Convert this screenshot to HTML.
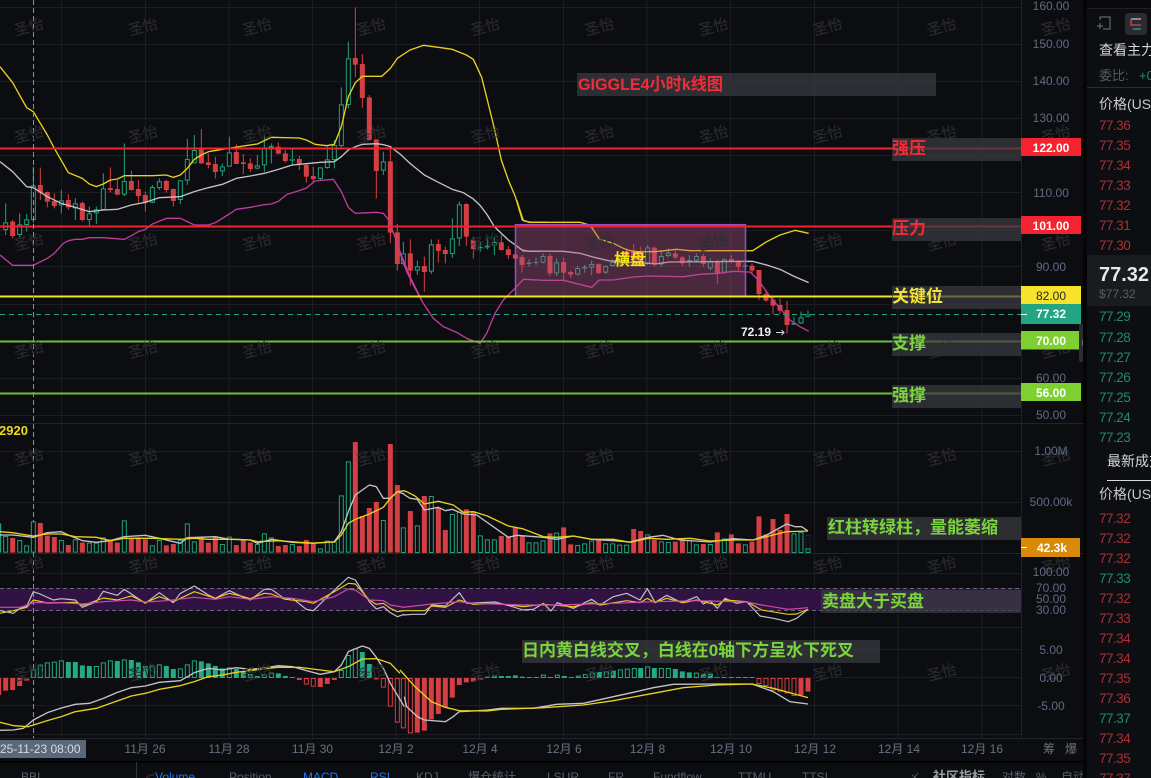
<!DOCTYPE html>
<html lang="zh"><head><meta charset="utf-8"><title>GIGGLE</title>
<style>
html,body{margin:0;padding:0;width:1151px;height:778px;overflow:hidden;background:#0c0d10}
svg{display:block;font-family:"Liberation Sans","Noto Sans CJK SC",sans-serif}
.ax{fill:#5f6b85;font-size:12px;text-anchor:middle}
.xl{fill:#667084;font-size:12px;text-anchor:middle}
.an{font-size:17px;font-weight:700}
.tb{fill:#5a606c;font-size:12px}
.bl{fill:#1e78ee;font-size:12px}
.rr{fill:#a93036;font-size:13.5px;letter-spacing:-.5px}
.gg{fill:#1f8a68;font-size:13.5px;letter-spacing:-.5px}
.lb{fill:#fff;font-size:12px;font-weight:700;text-anchor:middle}
</style></head><body>
<svg xmlns="http://www.w3.org/2000/svg" width="1151" height="778" viewBox="0 0 1151 778">
<defs>
<pattern id="wm" width="114.1" height="107.6" patternUnits="userSpaceOnUse" x="0" y="0">
<text x="29" y="32" transform="rotate(-15 29 27)" text-anchor="middle" font-size="15" fill="#2b2d31" font-family="Liberation Sans,Noto Sans CJK SC,sans-serif">圣怡</text>
</pattern>
</defs>
<rect width="1151" height="778" fill="#0c0d10"/>

<!-- grid -->
<path stroke="#1b1d21" stroke-width="1" fill="none" d="M61.5 0V738M145.5 0V738M229 0V738M312.5 0V738M396 0V738M479.5 0V738M563.5 0V738M647 0V738M730.5 0V738M814.5 0V738M898 0V738M982 0V738
M0 7.5H1021M0 44.5H1021M0 81.5H1021M0 118.5H1021M0 155.5H1021M0 192.5H1021M0 230.5H1021M0 266.5H1021M0 304.5H1021M0 341.5H1021M0 378.5H1021M0 415.5H1021M0 451.5H1021M0 502.5H1021M0 573.5H1021M0 627.5H1021M0 649.5H1021M0 677.5H1021M0 705.5H1021M0 734.5H1021"/>
<path stroke="#22242a" stroke-width="1" fill="none" d="M0 423.5H1083M0 553.5H1083M0 738.5H1083"/>

<!-- RSI band -->
<rect x="0" y="588.3" width="1021" height="22.4" fill="#30124300"/>
<rect x="0" y="588.3" width="1021" height="22.4" fill="#301243"/>
<path stroke="#6a6a72" stroke-width="1" stroke-dasharray="4 3" fill="none" d="M0 588.5H1021M0 610.5H1021"/>

<!-- candles, part 1 -->
<g transform="scale(.33333)" fill="none">
<path stroke="#1fa27c" stroke-width="3" d="M-4 660V710M17 610V705M59 640V712M80 642V695M100 500V668M184 570V640M226 595V660M268 620V678M289 620V672M310 520V632M373 430V588M457 555V610M478 535V570M541 540V612M562 417V555M583 405V490M667 490V528M688 410V500M772 465V508M793 405V516M814 430V490M877 448V495M961 502V540M982 440V506M1003 420V505M1024 262V442M1045 125V325M1150 455V525"/>
<path stroke="#1fa27c" stroke-width="15" d="M17 667V690M59 673V705M80 658V675M100 556V660M184 601V616M226 610V625M268 640V660M289 628V640M310 565V630M373 543V584M457 561V608M478 544V564M541 541V600M562 477V542M583 450V490M667 499V514M688 457V500M772 496V506M793 444V496M814 438V442M877 477V482M961 502V537M982 478V504M1003 435V480M1024 313V438M1045 175V315M1150 484V512"/>
<path stroke="#0c0d10" stroke-width="9" d="M17 670V687M59 676V702M80 661V672M100 559V657M184 604V613M226 613V622M268 643V657M289 631V637M310 568V627M373 546V581M457 564V605M478 547V561M541 544V597M562 480V539M583 453V487M667 502V511M688 460V497M772 499V503M793 447V493M877 479V480M961 505V534M982 481V501M1003 438V477M1024 316V435M1045 178V312M1150 487V509"/>
<path stroke="#de3b40" stroke-width="3" d="M38 660V715M121 503V600M142 575V622M163 580V625M205 582V630M247 605V665M331 502V578M352 540V586M394 512V572M415 540V608M436 575V635M499 540V578M520 565V620M604 387V492M625 460V505M646 470V535M709 433V492M730 462V522M751 475V516M835 427V463M856 450V488M898 468V510M919 490V548M940 500V550M1066 22V232M1087 162V323M1108 285V420M1129 418V595M1171 445V730M1192 672V812"/>
<path stroke="#d33f43" stroke-width="15" d="M38 665V708M121 555V578M142 576V605M163 603V618M205 600V622M247 609V660M331 564V570M352 567V584M394 543V570M415 567V588M436 585V608M499 543V570M520 567V603M604 449V490M625 487V495M646 492V516M709 456V492M730 487V492M751 490V507M835 440V461M856 460V483M898 477V493M919 495V530M940 528V537M1066 174V194M1087 192V294M1108 292V420M1129 418V513M1171 484V698M1192 697V792"/>
</g>
<!-- candles, part 2 -->
<g transform="translate(300 0) scale(.33333)" fill="none">
<path stroke="#1fa27c" stroke-width="3" d="M310 725V795M352 782V825M394 718V822M457 655V774M478 605V738M541 725V755M562 708V748M583 710V765"/>
<path stroke="#1fa27c" stroke-width="15" d="M310 760V792M352 799V812M394 733V815M457 715V762M478 613V715M541 741V746M562 737V742M583 726V736"/>
<path stroke="#0c0d10" stroke-width="9" d="M310 763V789M352 802V809M394 736V812M457 718V759M478 616V712M583 729V733"/>
<path stroke="#de3b40" stroke-width="3" d="M331 718V856M373 770V875M415 718V788M436 740V790M499 610V738M520 710V776M604 705V752M625 738V777M646 755V802"/>
<path stroke="#d33f43" stroke-width="15" d="M331 760V812M373 798V816M415 732V753M436 750V762M499 612V710M520 720V747M604 727V750M625 748V765M646 763V776"/>
</g>
<!-- candles, part 3 -->
<g transform="translate(400 200) scale(.33333)" fill="none">
<path stroke="#1fa27c" stroke-width="3" d="M387 178V200M408 172V195M429 160V190M470 175V228M533 198V226M554 195V218M575 182V225M617 196V222M638 178V200M659 165V195M743 135V195M784 150V200M805 145V172M868 165V200M889 160V188M931 175V210M973 175V222M1036 186V212M1182 350V375M1203 335V372M1224 332V352"/>
<path stroke="#1fa27c" stroke-width="15" d="M387 188V192M408 186V189M429 168V188M470 187V220M533 204V224M554 201V205M575 192V203M617 198V218M638 186V198M659 170V190M743 142V190M784 168V193M805 158V168M868 180V186M889 168V182M931 185V205M973 178V218M1036 196V200M1182 369V374M1203 352V370M1224 344V350"/>
<path stroke="#0c0d10" stroke-width="9" d="M429 171V185M470 190V217M533 207V221M575 195V200M617 201V215M638 189V195M659 173V187M743 145V187M784 171V190M805 161V165M889 171V179M931 188V202M973 181V215M1203 355V367M1224 346V348"/>
<path stroke="#de3b40" stroke-width="3" d="M366 165V218M450 160V228M491 172V240M512 212V234M596 190V222M680 150V195M701 132V195M722 140V200M763 140V200M826 152V178M847 168V198M910 162V200M952 178V252M994 165V190M1015 180V215M1056 190V220M1077 210V300M1098 270V305M1119 290V342M1140 295V342M1161 303V400"/>
<path stroke="#d33f43" stroke-width="15" d="M366 171V195M450 168V220M491 186V218M512 216V224M596 192V219M680 155V190M701 150V190M722 160V185M763 143V193M826 160V172M847 172V190M910 168V192M952 186V220M994 177V183M1015 186V200M1056 197V212M1077 210V282M1098 282V302M1119 299V317M1140 315V332M1161 330V375"/>
</g>

<!-- BOLL lines -->
<g transform="scale(.33333)" fill="none" stroke-width="4" stroke-linejoin="round">
<polyline stroke="#e7d21c" points="0,200 38,248 80,323 100,335 142,405 163,445 205,518 247,535 268,552 289,560 310,552 331,540 352,537 373,527 457,527 499,525 520,532 541,525 562,505 583,478 604,465 625,455 667,448 730,438 772,432 814,412 898,414 919,420 945,433 980,437 1003,433 1024,380 1045,290 1066,248 1087,229 1145,229 1171,205 1192,175 1230,150 1270,136 1315,142 1357,148 1399,165 1420,178 1445,232 1462,300 1483,385 1504,480 1525,540 1546,590 1567,660 1588,667 1620,667 1640,667"/>
<polyline stroke="#c4c4c8" points="0,485 38,515 80,560 100,563 142,590 184,610 226,622 268,635 310,630 352,628 394,615 436,607 478,593 541,590 583,575 625,563 667,553 709,535 751,528 793,520 835,508 877,495 919,491 961,487 1003,485 1024,470 1045,450 1066,440 1087,433 1129,431 1150,434 1171,440 1200,462 1230,490 1273,525 1315,547 1357,568 1390,578 1420,597 1441,617 1462,645 1483,680 1504,700 1525,720 1546,735 1567,750 1588,754 1620,754"/>
<polyline stroke="#c23a9c" points="0,765 38,796 100,796 142,775 163,760 190,730 205,722 226,718 247,718 268,713 310,713 373,718 394,707 415,695 436,688 457,672 499,655 541,655 583,675 625,675 646,668 688,642 709,628 751,622 793,614 814,612 835,604 861,583 898,572 919,564 945,543 1000,538 1024,575 1045,622 1066,640 1129,637 1150,640 1166,660 1192,730 1200,755 1230,830 1265,900"/>
</g>
<g transform="translate(400 200) scale(.33333)" fill="none" stroke-width="4" stroke-linejoin="round">
<polyline stroke="#e7d21c" points="350,0 370,62 392,67 541,67 562,73 577,85 598,117 640,130 670,145 700,155 766,155 829,148 870,152 1058,152 1100,125 1140,105 1185,91 1226,100"/>
<polyline stroke="#c4c4c8" points="345,135 370,153 490,154 541,160 583,172 625,182 661,185 703,188 745,190 766,192 808,186 1058,184 1100,195 1140,208 1180,228 1226,248"/>
<polyline stroke="#c23a9c" points="0,160 20,215 45,265 70,310 100,355 130,380 170,397 200,415 240,430 260,400 285,340 310,300 345,265 370,238 430,241 490,241 575,262 598,240 640,240 700,231 745,228 850,230 900,223 955,220 1000,214 1050,216 1075,240 1110,290 1140,325 1170,360 1200,380 1226,394"/>
</g>

<!-- range box -->
<rect x="515.5" y="224.7" width="230" height="72" fill="#b0558a" fill-opacity=".38" stroke="#9a4fc0" stroke-width="1.5"/>
<text x="614" y="265" font-size="16" font-weight="700" fill="#f3e60d">横盘</text>

<!-- levels -->
<path fill="none" stroke-width="2" d="M0 148.5H1021" stroke="#f2222e"/>
<path fill="none" stroke-width="2" d="M0 226.5H1021" stroke="#f2222e"/>
<path fill="none" stroke-width="2" d="M0 296.5H1021" stroke="#f4e31f"/>
<path fill="none" stroke-width="2" d="M0 341.5H1021" stroke="#6fbe33"/>
<path fill="none" stroke-width="2" d="M0 393.5H1021" stroke="#6fbe33"/>
<path fill="none" stroke-width="1" stroke-dasharray="5 4" d="M0 314.5H1021" stroke="#22a583"/>

<!-- crosshair -->
<path fill="none" stroke="#8f9196" stroke-width="1" stroke-dasharray="5 3" d="M33.5 0V738"/>

<!-- volume bars -->
<g transform="translate(0 420) scale(.33333)" fill="none">
<path stroke="#1fa27c" stroke-width="15" d="M-4 310V398M17 348V398M59 360V398M80 376V398M100 304V398M184 360V398M226 358V398M268 368V398M289 368V398M310 352V398M373 301V398M457 376V398M478 360V398M541 360V398M562 310V398M583 364V398M667 372V398M688 350V398M772 372V398M793 340V398M814 352V398M877 372V398M961 385V398M982 362V398M1003 365V398M1024 226V398M1045 124V398M1150 300V398"/>
<path stroke="#0c0d10" stroke-width="9" d="M17 351V395M59 363V395M80 379V395M100 307V395M184 363V395M226 361V395M268 371V395M289 371V395M310 355V395M373 304V395M457 379V395M478 363V395M541 363V395M562 313V395M583 367V395M667 375V395M688 353V395M772 375V395M793 343V395M814 355V395M877 375V395M961 388V395M982 365V395M1003 368V395M1024 229V395M1045 127V395M1150 303V395"/>
<path stroke="#d33f43" stroke-width="15" d="M38 354V398M121 309V398M142 347V398M163 351V398M205 375V398M247 368V398M331 358V398M352 368V398M394 355V398M415 352V398M436 358V398M499 376V398M520 372V398M604 350V398M625 368V398M646 352V398M709 375V398M730 360V398M751 368V398M835 378V398M856 375V398M898 378V398M919 360V398M940 372V398M1066 66V398M1087 288V398M1108 264V398M1129 246V398M1171 72V398M1192 195V398"/>
</g>
<g transform="translate(400 430) scale(.33333)" fill="none">
<path stroke="#1fa27c" stroke-width="15" d="M10 292V369M52 286V369M94 198V369M157 252V369M178 245V369M241 316V369M262 328V369M283 328V369M387 337V369M408 337V369M429 331V369M470 308V369M533 345V369M554 340V369M575 332V369M617 340V369M638 340V369M659 344V369M680 344V369M743 313V369M784 334V369M805 336V369M868 330V369M889 343V369M931 342V369M973 325V369M1036 343V369M1182 310V369M1203 306V369M1224 355V369"/>
<path stroke="#0c0d10" stroke-width="9" d="M10 295V366M52 289V366M94 201V366M157 255V366M178 248V366M241 319V366M262 331V366M283 331V366M387 340V366M408 340V366M429 334V366M470 311V366M533 348V366M554 343V366M575 335V366M617 343V366M638 343V366M659 347V366M680 347V366M743 316V366M784 337V366M805 339V366M868 333V366M889 346V366M931 345V366M973 328V366M1036 346V366M1182 313V366M1203 309V366M1224 358V366"/>
<path stroke="#d33f43" stroke-width="15" d="M31 243V369M73 198V369M115 233V369M136 300V369M199 238V369M220 245V369M304 318V369M325 320V369M346 292V369M367 318V369M450 310V369M491 292V369M512 343V369M596 330V369M701 297V369M722 303V369M763 330V369M826 335V369M847 325V369M910 342V369M952 307V369M994 313V369M1015 340V369M1056 335V369M1077 259V369M1098 313V369M1119 267V369M1140 300V369M1161 252V369"/>
<path stroke="#3a3c42" stroke-width="2" stroke-dasharray="5 4" d="M1218 316H1230V355M1218 316V355"/>
</g>
<!-- volume lines -->
<g transform="translate(0 420) scale(.33333)" fill="none" stroke-width="4" stroke-linejoin="round">
<polyline stroke="#c4c4c8" points="0,345 38,345 100,352 142,338 184,335 205,345 247,362 289,367 331,362 373,350 436,346 478,355 541,370 562,353 646,350 688,358 751,360 772,370 814,358 877,367 940,370 1003,365 1024,335 1045,275 1066,225 1108,195 1129,200 1150,235 1171,235 1192,215 1213,222"/>
<polyline stroke="#e7d21c" points="0,335 38,338 80,345 100,348 142,342 184,342 226,350 289,352 331,362 373,355 457,355 541,358 583,355 625,358 709,358 751,360 772,365 835,362 898,367 940,369 1003,366 1024,345 1045,310 1066,298 1108,282 1150,262 1171,235 1192,215 1213,212"/>
</g>
<g transform="translate(400 430) scale(.33333)" fill="none" stroke-width="4" stroke-linejoin="round">
<polyline stroke="#c4c4c8" points="10,192 30,205 52,208 73,240 115,232 136,242 157,238 190,252 230,255 325,322 350,316 430,322 470,328 520,318 575,328 640,332 690,336 745,322 790,316 840,330 930,336 1000,326 1060,330 1100,315 1160,282 1185,290 1205,290 1224,303"/>
<polyline stroke="#e7d21c" points="10,182 20,185 45,198 73,222 115,214 160,225 190,247 220,245 262,258 325,288 367,296 430,320 470,322 520,318 575,328 640,328 690,337 745,325 800,328 870,325 930,333 1000,330 1060,330 1100,320 1160,305 1224,303"/>
</g>

<!-- RSI lines -->
<g transform="translate(0 420) scale(.33333)" fill="none" stroke-width="3.5" stroke-linejoin="round">
<polyline stroke="#c4c4c8" points="0,572 40,580 60,565 80,560 100,515 120,522 160,540 184,536 226,540 247,562 289,545 310,514 352,526 373,508 436,550 478,518 520,548 541,520 583,498 625,525 646,535 688,512 730,532 751,540 793,508 814,508 856,538 877,535 919,568 940,572 1003,510 1045,472 1066,480 1108,545 1129,567 1150,560 1171,578 1192,590 1213,583"/>
<polyline stroke="#e0cd1c" points="0,580 40,572 80,562 100,540 142,549 226,547 250,556 310,534 352,540 394,528 436,548 478,530 520,545 583,515 646,535 688,520 730,530 751,536 793,520 814,522 856,538 919,545 940,550 1003,515 1045,490 1066,492 1108,540 1129,553 1150,550 1171,565 1192,575 1213,572"/>
<polyline stroke="#d04bb0" points="0,562 60,562 100,548 184,548 247,552 310,545 394,540 436,546 500,542 583,532 646,538 688,530 751,538 814,530 877,535 940,545 1003,530 1045,507 1066,510 1108,540 1150,542 1171,555 1213,562"/>
</g>
<g transform="translate(400 430) scale(.33333)" fill="none" stroke-width="3.5" stroke-linejoin="round">
<polyline stroke="#c4c4c8" points="10,555 40,553 75,553 95,525 136,528 178,488 200,520 285,516 330,528 370,540 400,538 430,520 453,543 472,518 520,535 575,508 600,525 640,500 680,490 720,510 742,476 765,517 800,496 845,518 890,500 910,522 930,512 952,535 975,505 1010,520 1040,515 1080,558 1120,565 1165,575 1190,565 1224,538"/>
<polyline stroke="#e0cd1c" points="10,542 75,542 95,528 136,532 178,510 220,523 285,520 370,530 430,523 520,530 575,518 600,525 680,512 720,518 742,505 765,518 800,505 850,518 890,510 952,525 975,510 1040,515 1085,540 1165,553 1190,552 1224,538"/>
<polyline stroke="#d04bb0" points="10,532 95,522 178,515 220,520 370,525 470,525 640,520 765,515 890,512 1040,516 1085,525 1165,538 1224,533"/>
</g>

<!-- MACD histogram -->
<g transform="translate(0 420) scale(.33333)" fill="none">
<path stroke="#25a884" stroke-width="15" d="M100 748V774M121 734V774M142 727V774M163 725V774M184 721V774M205 726V774M226 726V774M247 736V774M268 738V774M289 738V774M310 727V774M331 721V774M352 723V774M373 718V774M394 720V774M415 727V774M436 738V774M457 736V774M478 733V774M499 738V774M520 747V774M541 745V774M562 733V774M583 721V774M604 724V774M625 730V774M646 738V774M667 745V774M688 742V774M709 747V774M730 755V774M751 762V774M772 768V774M793 763V774M814 758V774M835 760V774M856 768V774M877 771V774M1024 750V774M1045 705V774M1066 685V774M1087 696V774M1108 732V774"/>
<path stroke="#0c0d10" stroke-width="9" d="M100 751V771M121 737V771M142 730V771M163 728V771M184 724V771M289 741V771M310 730V771M331 724V771M373 721V771M457 739V771M478 736V771M541 748V771M562 736V771M583 724V771M688 745V771M793 766V771M814 761V771M1024 753V771M1045 708V771M1066 688V771"/>
<path stroke="#d33f43" stroke-width="15" d="M-4 774V825M17 774V812M38 774V810M59 774V798M80 774V782M898 774V780M919 774V794M940 774V800M961 774V801M982 774V792M1003 774V780M1129 774V778M1150 774V803M1171 774V860M1192 774V908"/>
<path stroke="#0c0d10" stroke-width="9" d="M919 777V791M940 777V797M1150 777V800M1171 777V857M1192 777V905"/>
</g>
<g transform="translate(400 430) scale(.33333)" fill="none">
<path stroke="#d33f43" stroke-width="15" d="M10 744V895M31 744V910M52 744V908M73 744V902M94 744V868M115 744V852M136 744V832M157 744V803M178 744V765M199 744V757M220 744V755M241 744V750M1077 744V762M1098 744V768M1119 744V782M1140 744V785M1161 744V790M1182 744V798M1203 744V795M1224 744V785"/>
<path stroke="#0c0d10" stroke-width="9" d="M10 747V892M31 747V907M1077 747V759M1098 747V765M1119 747V779M1140 747V782M1161 747V787M1182 747V795"/>
<path stroke="#25a884" stroke-width="15" d="M262 740V744M283 737V744M304 738V744M325 738V744M346 736V744M367 740V744M388 741V744M409 741V744M430 734V744M451 741V744M472 734V744M493 738V744M514 741V744M535 737V744M556 732V744M577 727V744M598 726V744M619 724V744M640 722V744M661 718V744M682 716V744M703 714V744M722 714V744M743 709V744M763 714V744M784 714V744M805 714V744M826 717V744M847 724V744M868 727V744M889 728V744M910 731V744M931 731V744M952 741V744M973 741V744M994 741V744M1015 741V744M1036 741V744M1056 741V744"/>
<path stroke="#0c0d10" stroke-width="9" d="M283 740V741M430 737V741M472 737V741M535 740V741M556 735V741M577 730V741M619 727V741M661 721V741M682 719V741M703 717V741M743 712V741M784 717V741M805 717V741M889 731V741"/>
</g>
<!-- MACD lines -->
<g transform="translate(0 420) scale(.33333)" fill="none" stroke-width="4" stroke-linejoin="round">
<polyline stroke="#c4c4c8" points="0,931 40,930 70,925 100,900 142,878 184,864 226,853 268,850 310,835 352,817 394,803 436,798 478,787 541,782 583,758 625,745 667,750 709,743 751,748 793,744 835,737 877,740 919,752 961,763 1003,755 1024,735 1045,695 1087,678 1108,685 1129,712 1150,745 1171,790 1192,825 1213,860"/>
<polyline stroke="#e7d21c" points="0,907 40,917 85,920 142,902 184,890 226,875 289,865 331,850 394,828 436,820 478,808 541,797 583,785 625,770 667,765 709,757 751,752 793,746 835,742 898,742 961,750 1003,755 1045,740 1087,717 1129,716 1171,730 1200,760"/>
</g>
<g transform="translate(400 430) scale(.33333)" fill="none" stroke-width="4" stroke-linejoin="round">
<polyline stroke="#c4c4c8" points="13,800 20,830 52,860 73,870 136,875 157,862 178,845 220,843 262,840 304,835 400,835 470,823 550,820 640,800 700,787 760,773 820,763 950,762 1056,762 1120,785 1170,815 1224,822"/>
<polyline stroke="#e7d21c" points="0,720 45,770 94,815 136,832 178,842 262,843 304,838 430,833 550,825 640,812 760,790 850,773 950,765 1056,762 1120,775 1224,803"/>
</g>

<!-- annotation boxes -->
<g fill="#3a3c42" fill-opacity=".72">
<rect x="577" y="73" width="359" height="23"/>
<rect x="892" y="138" width="129" height="23"/>
<rect x="892" y="218" width="129" height="23"/>
<rect x="892" y="286" width="129" height="23"/>
<rect x="892" y="333" width="129" height="23"/>
<rect x="892" y="385" width="129" height="23"/>
<rect x="827" y="517" width="194" height="23"/>
<rect x="821" y="590" width="200" height="23"/>
<rect x="522" y="640" width="358" height="23"/>
</g>
<text class="an" x="578" y="90" fill="#f02c37" textLength="145" lengthAdjust="spacingAndGlyphs">GIGGLE4小时k线图</text>
<text class="an" x="892" y="154" fill="#f02c37">强压</text>
<text class="an" x="892" y="234" fill="#f02c37">压力</text>
<text class="an" x="892" y="302" fill="#f3e23a">关键位</text>
<text class="an" x="892" y="349" fill="#7ad63a">支撑</text>
<text class="an" x="892" y="401" fill="#7ad63a">强撑</text>
<text class="an" x="828" y="533" fill="#7ad63a">红柱转绿柱，量能萎缩</text>
<text class="an" x="822" y="607" fill="#7ad63a">卖盘大于买盘</text>
<text class="an" x="522" y="656" fill="#7ad63a" textLength="332" lengthAdjust="spacingAndGlyphs">日内黄白线交叉，白线在0轴下方呈水下死叉</text>

<text x="741" y="336" font-size="12" font-weight="700" fill="#eef0f3">72.19</text>
<path d="M776 332.5h8M781.5 330l2.5 2.5-2.5 2.5" fill="none" stroke="#d8dade" stroke-width="1"/>
<text x="-1" y="435" font-size="13" font-weight="700" fill="#e8dc1c">2920</text>

<!-- watermark -->
<rect x="0" y="0" width="1083" height="738" fill="url(#wm)"/>

<!-- y axis -->
<path d="M1021.5 0V738" stroke="#1f2126" stroke-width="1"/>
<text class="ax" x="1051" y="10">160.00</text>
<text class="ax" x="1051" y="48">150.00</text>
<text class="ax" x="1051" y="85">140.00</text>
<text class="ax" x="1051" y="122">130.00</text>
<text class="ax" x="1051" y="197">110.00</text>
<text class="ax" x="1051" y="271">90.00</text>
<text class="ax" x="1051" y="382">60.00</text>
<text class="ax" x="1051" y="419">50.00</text>
<text class="ax" x="1051" y="455">1.00M</text>
<text class="ax" x="1051" y="506">500.00k</text>
<text class="ax" x="1051" y="576">100.00</text>
<text class="ax" x="1051" y="592">70.00</text>
<text class="ax" x="1051" y="603">50.00</text>
<text class="ax" x="1051" y="614">30.00</text>
<text class="ax" x="1051" y="654">5.00</text>
<text class="ax" x="1051" y="682">0.00</text>
<text class="ax" x="1051" y="710">-5.00</text>

<!-- price tags -->
<rect x="1021" y="138" width="60" height="18" fill="#f5222f"/><text class="lb" x="1051" y="152">122.00</text>
<rect x="1021" y="216" width="60" height="18" fill="#f5222f"/><text class="lb" x="1051" y="230">101.00</text>
<rect x="1021" y="286" width="60" height="18" fill="#f7e22c"/><text x="1051" y="300" font-size="12" text-anchor="middle" fill="#2a2a20">82.00</text>
<rect x="1021" y="304" width="60" height="20" fill="#22a583"/><text class="lb" x="1051" y="318">77.32</text>
<path d="M1021 314.5H1027M1021 547.5H1027" stroke="#fff" stroke-width="1"/>
<rect x="1021" y="331" width="58" height="18.5" fill="#7ed032"/><text class="lb" x="1051" y="345">70.00</text>
<rect x="1021" y="383" width="60" height="18" fill="#7ed032"/><text class="lb" x="1051" y="397">56.00</text>
<rect x="1021" y="538" width="59" height="19" fill="#d98a0a"/><path d="M1021 547.5H1027" stroke="#fff" stroke-width="1"/><text class="lb" x="1052" y="552">42.3k</text>

<rect x="1079" y="324" width="8" height="38" rx="2" fill="#2b2d32"/>
<path d="M1082 340l4 3-4 3z" fill="#6c7078"/>

<!-- x axis -->
<rect x="0" y="739" width="1083" height="23" fill="#0c0d10"/>
<rect x="0" y="740" width="86" height="18" fill="#5b677b"/>
<text x="0" y="753" font-size="12" fill="#d8dbe0">25-11-23 08:00</text>
<text class="xl" x="145" y="753">11月 26</text>
<text class="xl" x="229" y="753">11月 28</text>
<text class="xl" x="312.5" y="753">11月 30</text>
<text class="xl" x="396" y="753">12月 2</text>
<text class="xl" x="480" y="753">12月 4</text>
<text class="xl" x="564" y="753">12月 6</text>
<text class="xl" x="647.5" y="753">12月 8</text>
<text class="xl" x="731" y="753">12月 10</text>
<text class="xl" x="815" y="753">12月 12</text>
<text class="xl" x="899" y="753">12月 14</text>
<text class="xl" x="982" y="753">12月 16</text>
<text x="1043" y="753" font-size="12" fill="#6e7076">筹</text>
<text x="1065" y="753" font-size="12" fill="#6e7076">爆</text>

<!-- bottom tabs -->
<rect x="0" y="762" width="1083" height="16" fill="#0c0d10"/>
<path d="M0 762H1083" stroke="#000" stroke-width="1.5"/>
<path d="M136.5 762V778" stroke="#33353a"/>
<text class="tb" x="21" y="781">BBI</text>
<path d="M146 778l4-3M150 775h4" stroke="#3a3c42" fill="none"/>
<text class="bl" x="155" y="781">Volume</text>
<text class="tb" x="229" y="781">Position</text>
<text class="bl" x="303" y="781">MACD</text>
<text class="bl" x="370" y="781">RSI</text>
<text class="tb" x="416" y="781">KDJ</text>
<text class="tb" x="468" y="781">爆仓统计</text>
<text class="tb" x="547" y="781">LSUR</text>
<text class="tb" x="608" y="781">FR</text>
<text class="tb" x="653" y="781">Fundflow</text>
<text class="tb" x="738" y="781">TTMU</text>
<text class="tb" x="802" y="781">TTSI</text>
<path d="M912 775l4 3M918 773l-4 5" stroke="#4f5663" fill="none"/>
<text x="933" y="781" font-size="13" font-weight="700" fill="#9a9da3">社区指标</text>
<text class="tb" x="1002" y="781">对数</text>
<text class="tb" x="1036" y="781">%</text>
<text class="tb" x="1061" y="781">自动</text>

<!-- gap + right panel -->
<rect x="1083" y="0" width="4" height="778" fill="#050506"/>
<rect x="1087" y="0" width="64" height="778" fill="#0d0e11"/>
<rect x="1087" y="0" width="64" height="8" fill="#09090b"/>
<path d="M1087 8.5H1151" stroke="#1f2125"/>
<path d="M1100 20v-3h10v12h-7M1097 26h6M1100 23v6" fill="none" stroke="#63666c" stroke-width="1.2"/>
<rect x="1125" y="13" width="22" height="22" rx="4" fill="#2a2c31"/>
<path d="M1131 19h10" stroke="#b8bbc0" stroke-width="1.3"/>
<path d="M1131 19v6h10" fill="none" stroke="#d8434a" stroke-width="1.3"/>
<path d="M1133 29h8" stroke="#22a583" stroke-width="1.3"/>
<text x="1099" y="55" font-size="14" fill="#d4d6da">查看主力</text>
<text x="1099" y="80" font-size="13" fill="#575a60">委比:</text>
<text x="1139" y="80" font-size="13" fill="#1f8a68">+0</text>
<path d="M1087 87.5H1151" stroke="#2a2c30"/>
<text x="1099" y="109" font-size="14" fill="#c8cacf">价格(US</text>
<text class="rr" x="1099" y="130">77.36</text>
<text class="rr" x="1099" y="150">77.35</text>
<text class="rr" x="1099" y="170">77.34</text>
<text class="rr" x="1099" y="190">77.33</text>
<text class="rr" x="1099" y="210">77.32</text>
<text class="rr" x="1099" y="230">77.31</text>
<text class="rr" x="1099" y="250">77.30</text>
<rect x="1087" y="255" width="64" height="51" fill="#191b1f"/>
<text x="1099" y="281" font-size="20" font-weight="700" fill="#e6e8ec">77.32</text>
<text x="1099" y="298" font-size="12" fill="#5a5d63">$77.32</text>
<text class="gg" x="1099" y="321">77.29</text>
<text class="gg" x="1099" y="342">77.28</text>
<text class="gg" x="1099" y="362">77.27</text>
<text class="gg" x="1099" y="382">77.26</text>
<text class="gg" x="1099" y="402">77.25</text>
<text class="gg" x="1099" y="422">77.24</text>
<text class="gg" x="1099" y="442">77.23</text>
<text x="1107" y="466" font-size="14" fill="#d4d6da">最新成交</text>
<rect x="1107" y="480" width="44" height="1" fill="#d8dade"/>
<text x="1099" y="499" font-size="14" fill="#c8cacf">价格(US</text>
<text class="rr" x="1099" y="523">77.32</text>
<text class="rr" x="1099" y="543">77.32</text>
<text class="rr" x="1099" y="563">77.32</text>
<text class="gg" x="1099" y="583">77.33</text>
<text class="rr" x="1099" y="603">77.32</text>
<text class="rr" x="1099" y="623">77.33</text>
<text class="rr" x="1099" y="643">77.34</text>
<text class="rr" x="1099" y="663">77.34</text>
<text class="rr" x="1099" y="683">77.35</text>
<text class="rr" x="1099" y="703">77.36</text>
<text class="gg" x="1099" y="723">77.37</text>
<text class="rr" x="1099" y="743">77.34</text>
<text class="rr" x="1099" y="763">77.35</text>
<text class="rr" x="1099" y="783">77.37</text>
</svg>
</body></html>
